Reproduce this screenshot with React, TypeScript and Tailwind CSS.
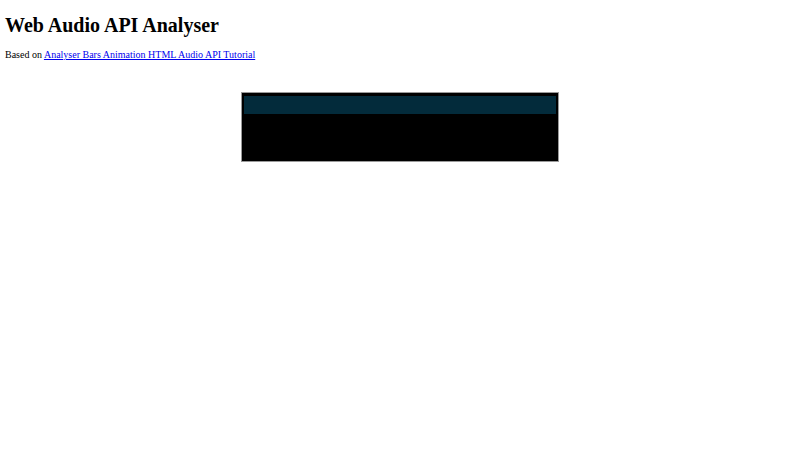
export default function App() {
  return (
    <div className="min-h-[450px] bg-white px-[5px] pt-[15px] font-['Liberation_Serif',serif] text-black">
      <h1 className="text-[20px] font-bold leading-[20px]">Web Audio API Analyser</h1>
      <p className="mt-[14px] text-[10px] leading-[12px]">
        Based on{" "}
        <a href="#" className="text-[#0000ee] underline">
          Analyser Bars Animation HTML Audio API Tutorial
        </a>
      </p>
      <div className="mt-[31px] flex justify-center">
        <div className="h-[70px] w-[318px] border border-[#9a9a9a] bg-black p-[2px]">
          <div className="mt-px h-[18px] w-full bg-[#032b3b]" />
        </div>
      </div>
    </div>
  );
}
